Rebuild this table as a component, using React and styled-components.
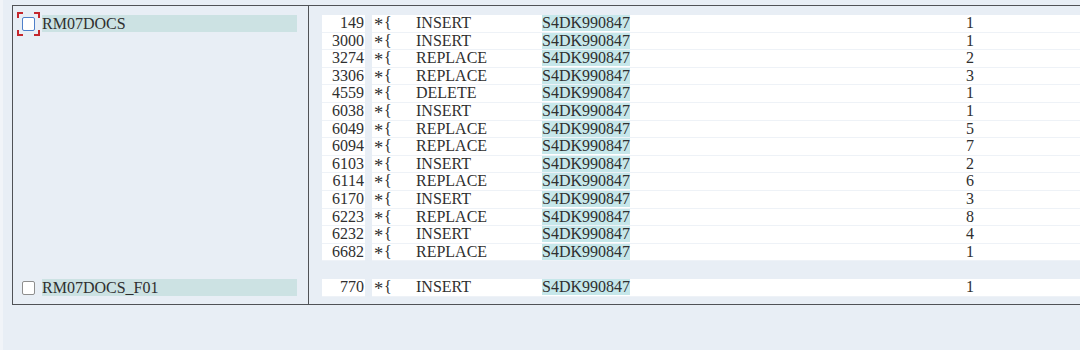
import React from "react";
import styled, { createGlobalStyle } from "styled-components";

const Global = createGlobalStyle`
  html, body { margin: 0; padding: 0; }
  body {
    background: #e8eef5;
    font-family: "Liberation Serif", "Times New Roman", serif;
    color: #2f2f2f;
    overflow: hidden;
  }
`;

const Page = styled.div`
  width: 1080px;
  height: 350px;
  box-sizing: border-box;
  border-left: 3px solid #f1f4f8;
  padding-top: 5px;
  padding-left: 9px;
  overflow: hidden;
`;

const Frame = styled.div`
  width: 1200px;
  border-top: 1px solid #505256;
  border-left: 1px solid #505256;
  border-bottom: 1px solid #505256;
`;

const Group = styled.div`
  display: flex;
`;

const Side = styled.div`
  width: 296px;
  flex: none;
  box-sizing: border-box;
  border-right: 1px solid #505256;
  padding: ${(p) => p.$top}px 11px ${(p) => p.$bottom}px 9px;
`;

const Entry = styled.div`
  display: flex;
  align-items: center;
  height: 17.6px;
  gap: 7px;
`;

const BoxWrap = styled.span`
  position: relative;
  display: inline-flex;
  flex: none;
`;

const Box = styled.span`
  width: 13px;
  height: 14px;
  box-sizing: border-box;
  border-radius: 2px;
  background: #ffffff;
  border: ${(p) => (p.$focused ? "1.5px solid #4e7fc9" : "1px solid #8e8e8e")};
`;

const Focus = styled.svg`
  position: absolute;
  left: -5px;
  top: -5px;
  width: 23px;
  height: 24px;
  pointer-events: none;
`;

const Label = styled.span`
  flex: 1;
  height: 17px;
  line-height: 17px;
  background: #cce2e3;
  font-family: "Liberation Serif", "Times New Roman", serif;
  font-size: 16px;
  color: #2f2f2f;
  white-space: nowrap;
  overflow: hidden;
`;

const Lines = styled.div`
  flex: 1;
  padding: ${(p) => p.$top}px 0 ${(p) => p.$bottom}px 13px;
`;

const Row = styled.div`
  display: flex;
  height: 17.6px;
  font-size: 16px;
  line-height: 16px;
`;

const NumCell = styled.div`
  width: 43px;
  box-sizing: border-box;
  background: #ffffff;
  border-bottom: 1.6px solid #eef2f7;
  text-align: right;
  padding-right: 1px;
  margin-right: 7px;
`;

const Content = styled.div`
  flex: 1;
  display: grid;
  grid-template-columns: 43px 126px 424px 1fr;
  padding-left: 1px;
  background: #ffffff;
  border-bottom: 1.6px solid #eef2f7;
  white-space: nowrap;
`;

const Star = styled.span`
  display: flex;
  align-items: flex-start;
`;

const Asterisk = styled.span`
  display: inline-block;
  width: 11px;
  text-align: center;
  transform: translateY(2px) scale(1.15);
`;

const Transport = styled.span`
  justify-self: start;
  background: #c6e7ea;
  height: 16px;
`;

const Count = styled.span``;

function Checkbox({ focused }) {
  return (
    <BoxWrap>
      <Box $focused={focused} />
      {focused && (
        <Focus viewBox="0 0 23 24">
          <path
            d="M1 6V1h5 M17 1h5v5 M22 18v5h-5 M6 23H1v-5"
            fill="none"
            stroke="#c4262c"
            strokeWidth="2"
          />
        </Focus>
      )}
    </BoxWrap>
  );
}

const groups = [
  {
    name: "RM07DOCS",
    focused: true,
    top: 9,
    bottom: 17.6,
    rows: [
      ["149", "INSERT", "1"],
      ["3000", "INSERT", "1"],
      ["3274", "REPLACE", "2"],
      ["3306", "REPLACE", "3"],
      ["4559", "DELETE", "1"],
      ["6038", "INSERT", "1"],
      ["6049", "REPLACE", "5"],
      ["6094", "REPLACE", "7"],
      ["6103", "INSERT", "2"],
      ["6114", "REPLACE", "6"],
      ["6170", "INSERT", "3"],
      ["6223", "REPLACE", "8"],
      ["6232", "INSERT", "4"],
      ["6682", "REPLACE", "1"],
    ],
  },
  {
    name: "RM07DOCS_F01",
    focused: false,
    top: 0,
    bottom: 7,
    rows: [["770", "INSERT", "1"]],
  },
];

export default function App() {
  return (
    <>
      <Global />
      <Page>
        <Frame>
          {groups.map((g) => (
            <Group key={g.name}>
              <Side $top={g.top} $bottom={g.bottom}>
                <Entry>
                  <Checkbox focused={g.focused} />
                  <Label>{g.name}</Label>
                </Entry>
              </Side>
              <Lines $top={g.top} $bottom={g.bottom}>
                {g.rows.map(([line, op, count]) => (
                  <Row key={line}>
                    <NumCell>{line}</NumCell>
                    <Content>
                      <Star>
                        <Asterisk>*</Asterisk>
                        {"{"}
                      </Star>
                      <span>{op}</span>
                      <Transport>S4DK990847</Transport>
                      <Count>{count}</Count>
                    </Content>
                  </Row>
                ))}
              </Lines>
            </Group>
          ))}
        </Frame>
      </Page>
    </>
  );
}
